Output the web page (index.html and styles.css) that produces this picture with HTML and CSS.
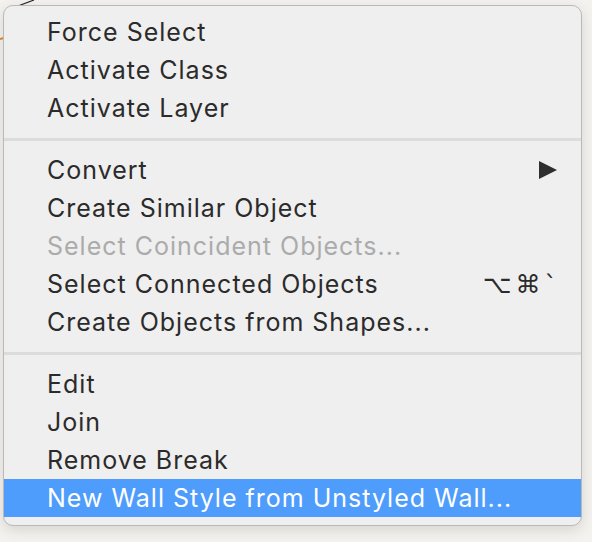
FILE: index.html
```
<!DOCTYPE html>
<html>
<head>
<meta charset="utf-8">
<link rel="stylesheet" href="styles.css">
</head>
<body>
<div class="canvas">
  <svg class="bg-lines" width="592" height="542" viewBox="0 0 592 542">
    <line x1="18" y1="6" x2="34" y2="0" stroke="#222" stroke-width="1.2"/>
    <line x1="0" y1="39" x2="4" y2="38" stroke="#e08a2a" stroke-width="2"/>
  </svg>
  <div class="menu">
    <div class="group">
      <div class="item"><span class="label">Force Select</span></div>
      <div class="item"><span class="label">Activate Class</span></div>
      <div class="item"><span class="label">Activate Layer</span></div>
    </div>
    <div class="sep"></div>
    <div class="group">
      <div class="item"><span class="label">Convert</span><span class="arrow"></span></div>
      <div class="item"><span class="label">Create Similar Object</span></div>
      <div class="item disabled"><span class="label">Select Coincident Objects...</span></div>
      <div class="item"><span class="label">Select Connected Objects</span><span class="shortcut">⌥⌘`</span></div>
      <div class="item"><span class="label">Create Objects from Shapes...</span></div>
    </div>
    <div class="sep"></div>
    <div class="group">
      <div class="item"><span class="label">Edit</span></div>
      <div class="item"><span class="label">Join</span></div>
      <div class="item"><span class="label">Remove Break</span></div>
      <div class="item selected"><span class="label">New Wall Style from Unstyled Wall...</span></div>
    </div>
  </div>
</div>
</body>
</html>
```
FILE: styles.css
```
html, body {
  margin: 0;
  padding: 0;
}
body {
  width: 592px;
  height: 542px;
  background: #f4f2ee;
  overflow: hidden;
  font-family: "Inter", "Liberation Sans", sans-serif;
}
.canvas {
  position: relative;
  width: 592px;
  height: 542px;
  padding: 5px 0 0 3px;
  box-sizing: border-box;
}
.bg-lines {
  position: absolute;
  left: 0;
  top: 0;
}
.menu {
  position: relative;
  width: 579px;
  height: 521px;
  box-sizing: border-box;
  background: #efefef;
  border: 1px solid #b9b9b9;
  border-radius: 10px;
  padding: 7px 0 8px 0;
  box-shadow: 0 4px 14px rgba(0, 0, 0, 0.12);
  display: flex;
  flex-direction: column;
}
.group {
  display: flex;
  flex-direction: column;
}
.item {
  height: 38px;
  display: flex;
  align-items: center;
  padding: 0 24px 0 43px;
  font-size: 25px;
  color: #2b2b2b;
  letter-spacing: 1px;
}
.item .label {
  flex: 1;
  white-space: nowrap;
}
.item.disabled {
  color: #ababab;
}
.item.selected {
  background: #4e9cfc;
  color: #ffffff;
}
.sep {
  height: 24px;
  display: flex;
  align-items: center;
}
.sep::before {
  content: "";
  display: block;
  width: 100%;
  height: 3px;
  background: #dcdcdc;
}
.arrow {
  width: 0;
  height: 0;
  border-top: 9px solid transparent;
  border-bottom: 9px solid transparent;
  border-left: 18px solid #2e2e2e;
}
.shortcut {
  font-family: "DejaVu Sans", sans-serif;
  font-size: 25px;
  letter-spacing: 4px;
  color: #2b2b2b;
  margin-right: -4px;
}
```
